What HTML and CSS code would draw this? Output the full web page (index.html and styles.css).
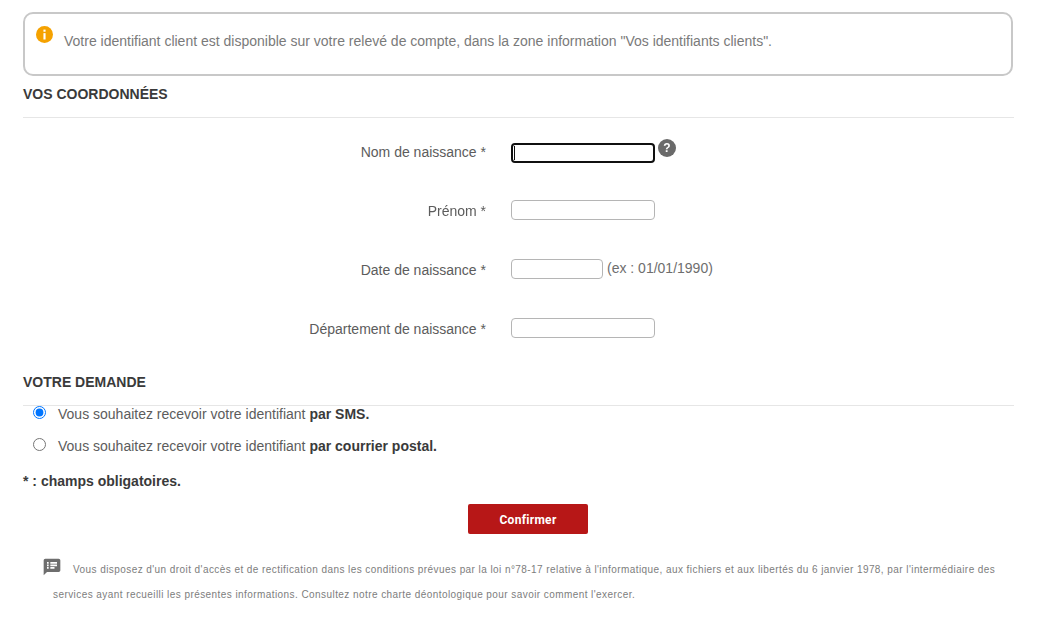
FILE: index.html
```html
<!DOCTYPE html>
<html lang="fr">
<head>
<meta charset="utf-8">
<title>Identifiant client</title>
<link rel="stylesheet" href="styles.css">
</head>
<body>
<main class="page">
  <div class="alert">
    <svg class="alert-icon" viewBox="0 0 16 16" width="17" height="17"><circle cx="8" cy="8" r="8" fill="#f5a200"/><rect x="7" y="3.4" width="2" height="2" fill="#fff"/><rect x="7" y="6.7" width="2" height="6" fill="#fff"/></svg>
    <p class="alert-text">Votre identifiant client est disponible sur votre relevé de compte, dans la zone information "Vos identifiants clients".</p>
  </div>
  <h2 class="section-title first">VOS COORDONNÉES</h2>
  <form class="form">
    <div class="row">
      <label class="row-label" for="nom">Nom de naissance *</label>
      <input class="field focused" id="nom" type="text" autofocus>
      <span class="help">?</span>
    </div>
    <div class="row">
      <label class="row-label" for="prenom">Prénom *</label>
      <input class="field" id="prenom" type="text">
    </div>
    <div class="row">
      <label class="row-label" for="date">Date de naissance *</label>
      <input class="field short" id="date" type="text">
      <span class="hint">(ex : 01/01/1990)</span>
    </div>
    <div class="row">
      <label class="row-label" for="dep">Département de naissance *</label>
      <input class="field" id="dep" type="text">
    </div>
  </form>
  <h2 class="section-title second">VOTRE DEMANDE</h2>
  <div class="radios">
    <label class="radio-row"><input class="radio" type="radio" name="mode" checked><span>Vous souhaitez recevoir votre identifiant <b>par SMS.</b></span></label>
    <label class="radio-row"><input class="radio" type="radio" name="mode"><span>Vous souhaitez recevoir votre identifiant <b>par courrier postal.</b></span></label>
  </div>
  <p class="required">* : champs obligatoires.</p>
  <div class="actions"><button class="confirm" type="button">Confirmer</button></div>
  <div class="legal">
    <svg class="legal-icon" viewBox="0 0 24 24" width="20" height="20"><path fill="#6e6e6e" d="M20 2H4c-1.100 0-2 .9-2 2v18l4-4h14c1.100 0 2-.9 2-2V4c0-1.100-.9-2-2-2zM8 14H6v-2h2v2zm0-3H6V9h2v2zm0-3H6V6h2v2zm7 6h-5v-2h5v2zm3-3h-8V9h8v2zm0-3h-8V6h8v2z"/></svg>
    <span>Vous disposez d'un droit d'accès et de rectification dans les conditions prévues par la loi n°78-17 relative à l'informatique, aux fichiers et aux libertés du 6 janvier 1978, par l'intermédiaire des services ayant recueilli les présentes informations. Consultez notre charte déontologique pour savoir comment l'exercer.</span>
  </div>
</main>
</body>
</html>
```
FILE: styles.css
```css
* { box-sizing: border-box; }
html, body { margin: 0; padding: 0; background: #fff; }
body { font-family: "Liberation Sans", Arial, sans-serif; font-size: 14px; color: #666; overflow: hidden; }
.page { width: 991px; margin-left: 23px; padding-top: 12px; }
.alert { width: 990px; height: 64px; border: 2px solid #c8c8c8; border-radius: 10px; display: flex; align-items: flex-start; padding: 12px 11px; }
.alert-icon { flex: none; margin-right: 11px; }
.alert-text { margin: 7px 0 0; line-height: 16px; color: #7a7a7a; }
.section-title { margin: 0; font-size: 14px; line-height: 16px; font-weight: 700; color: #3a3a3a; border-bottom: 1px solid #e6e6e6; }
.section-title.first { padding: 10px 0 15px; }
.section-title.second { margin-top: -3px; padding-bottom: 15px; }
.form { padding-top: 23px; }
.row { display: flex; align-items: flex-start; height: 59px; }
.row-label { width: 463px; text-align: right; line-height: 16px; padding-top: 3px; color: #5c5c5c; flex: none; margin-right: 25px; }
.field { width: 144px; height: 20px; padding: 1px 2px; border: 1px solid #b5b5b5; border-radius: 4px; background: #fff; font-size: 13px; outline: none; }
.field.short { width: 92px; }
.field.focused { margin-top: 2px; border: 2px solid #101010; caret-color: transparent; background: linear-gradient(#101010, #101010) 1px center / 1px 14px no-repeat #fff; }
.help { width: 18px; height: 18px; border-radius: 50%; background: #6a6a6a; color: #fff; font-weight: 700; font-size: 12px; line-height: 18px; text-align: center; margin: -2px 0 0 3px; }
.hint { margin-left: 4px; padding-top: 1px; line-height: 16px; color: #6e6e6e; }
.radio-row { display: flex; align-items: flex-start; height: 32px; color: #5c5c5c; line-height: 16px; }
.radio-row b { color: #3a3a3a; }
.radio { width: 13px; height: 13px; margin: 0 12px 0 10px; flex: none; accent-color: #0075ff; }
.required { margin: 3px 0 0; font-weight: 700; color: #3a3a3a; line-height: 16px; }
.actions { width: 1010px; display: flex; justify-content: center; margin-top: 15px; }
.confirm { width: 120px; height: 30px; border: 0; border-radius: 2px; background: #b71717; color: #fff; font-family: Roboto, sans-serif; font-size: 12px; font-weight: 700; letter-spacing: .3px; padding: 2px 0 0; }
.legal { margin: 23px 0 0; padding: 0 18px 0 30px; font-size: 10px; line-height: 25px; color: #7d7d7d; letter-spacing: .43px; }
.legal-icon { float: left; margin: 0 11px 0 -11px; }
```
